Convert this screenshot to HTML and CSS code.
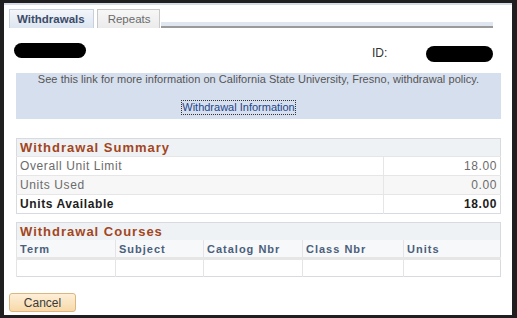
FILE: index.html
```html
<!DOCTYPE html>
<html lang="en">
<head>
    <meta charset="UTF-8">
    <title>Withdrawals</title>
    <link rel="stylesheet" href="styles.css">
</head>
<body>
    <div class="page">
        <div class="tabs">
            <div class="tab active">Withdrawals</div>
            <div class="tab">Repeats</div>
            <div class="tab-line"></div>
        </div>

        <div class="student-row">
            <span class="redact name"></span>
            <span class="id-label">ID:</span>
            <span class="redact id"></span>
        </div>

        <div class="info-box">
            <p>See this link for more information on California State University, Fresno, withdrawal policy.</p>
            <a class="info-link" href="#">Withdrawal Information</a>
        </div>

        <table class="grid summary">
            <tr><th colspan="2" class="grid-title">Withdrawal Summary</th></tr>
            <tr><td class="label">Overall Unit Limit</td><td class="value">18.00</td></tr>
            <tr class="alt"><td class="label">Units Used</td><td class="value">0.00</td></tr>
            <tr class="total"><td class="label">Units Available</td><td class="value">18.00</td></tr>
        </table>

        <table class="grid courses">
            <tr><th colspan="5" class="grid-title">Withdrawal Courses</th></tr>
            <tr class="col-head">
                <td class="c-term">Term</td>
                <td class="c-subject">Subject</td>
                <td class="c-catalog">Catalog Nbr</td>
                <td class="c-class">Class Nbr</td>
                <td>Units</td>
            </tr>
            <tr class="empty"><td></td><td></td><td></td><td></td><td></td></tr>
        </table>

        <button class="cancel-btn">Cancel</button>
    </div>
</body>
</html>
```

FILE: styles.css
```css
body {
    margin: 0;
    background: #1f1f1f;
    font-family: "Liberation Sans", Arial, sans-serif;
    color: #333;
}

.page {
    margin: 3px 5px 3px 4px;
    height: 312px;
    background: white;
    border-top: 2px solid #d6dce6;
    box-sizing: border-box;
    overflow: hidden;
}

/* tabs */
.tabs {
    display: flex;
    align-items: flex-end;
    margin: 3px 19px 0 5px;
    height: 20px;
}

.tab {
    height: 19px;
    line-height: 19px;
    padding: 0 9px 0 10px;
    font-size: 11.5px;
    color: #6a6a6a;
    background: linear-gradient(#f7f7f7, #ebebeb);
    border: 1px solid #c8c8c8;
    border-bottom: none;
    box-sizing: border-box;
    margin-right: 3px;
}

.tab.active {
    font-weight: bold;
    color: #3b4b69;
    background: linear-gradient(#f3f6fa, #dce5f1);
    border-color: #c6d0de;
    padding: 0 8px 0 7px;
}

.tab-line {
    flex: 1;
    height: 4px;
    background: #dfe6f0;
    border-bottom: 2px solid #9a9a9a;
    margin-left: -2px;
}

/* student row */
.student-row {
    display: flex;
    align-items: flex-start;
    height: 30px;
    margin-top: 15px;
    padding-left: 10px;
}

.redact {
    display: inline-block;
    background: #000;
    border-radius: 8px;
}

.redact.name {
    width: 72px;
    height: 15px;
}

.redact.id {
    width: 67px;
    height: 16px;
    margin-top: 3px;
}

.id-label {
    font-size: 12px;
    color: #333;
    margin: 3px 0 0 286px;
    width: 54px;
}

/* info box */
.info-box {
    margin: 0 0 0 12px;
    width: 485px;
    height: 46px;
    background: #d6dfee;
    text-align: center;
    font-size: 11px;
    color: #555;
    box-sizing: border-box;
}

.info-box p {
    margin: 0 0 15px 0;
    letter-spacing: 0.05px;
}

.info-link {
    display: inline-block;
    color: #23468a;
    text-decoration: none;
    border: 1px dotted #333;
    padding: 0 0 1px 0;
    margin-right: 40px;
}

/* grids */
.grid {
    border-collapse: collapse;
    width: 485px;
    margin-left: 12px;
    border: 1px solid #d7dbe0;
    letter-spacing: 0.6px;
}

.grid-title {
    text-align: left;
    background: #eff2f5;
    color: #a3451c;
    font-size: 13px;
    font-weight: bold;
    letter-spacing: 1px;
    height: 17px;
    padding: 0 3px;
}

.summary {
    margin-top: 19px;
}

.summary td {
    height: 18px;
    padding: 0 3px;
    font-size: 12px;
    color: #6b6b6b;
    border-top: 1px solid #e6e6e6;
}

.summary .value {
    width: 110px;
    text-align: right;
    border-left: 1px solid #e6e6e6;
}

.summary .alt td {
    background: #f7f7f7;
}

.summary .total td {
    color: #1d1d1d;
    font-weight: bold;
}

.courses {
    margin-top: 8px;
}

.courses td {
    padding: 0 3px;
    border-left: 1px solid #e4e4e4;
    font-size: 11px;
}

.col-head td {
    height: 17px;
    background: #f7f8f9;
    color: #4a5f7c;
    font-weight: bold;
    letter-spacing: 1px;
    border-bottom: 3px solid #e6e6e6;
}

.empty td {
    height: 16px;
    background: white;
}

.c-term { width: 92px; }
.c-subject { width: 81px; }
.c-catalog { width: 92px; }
.c-class { width: 94px; }

.cancel-btn {
    display: block;
    margin: 16px 0 0 5px;
    width: 67px;
    height: 19px;
    padding: 0;
    font-family: "Liberation Sans", Arial, sans-serif;
    font-size: 12px;
    color: #3a3a3a;
    background: linear-gradient(#fdefd8, #f7d9a9);
    border: 1px solid #dcb67d;
    border-radius: 3px;
}
```
